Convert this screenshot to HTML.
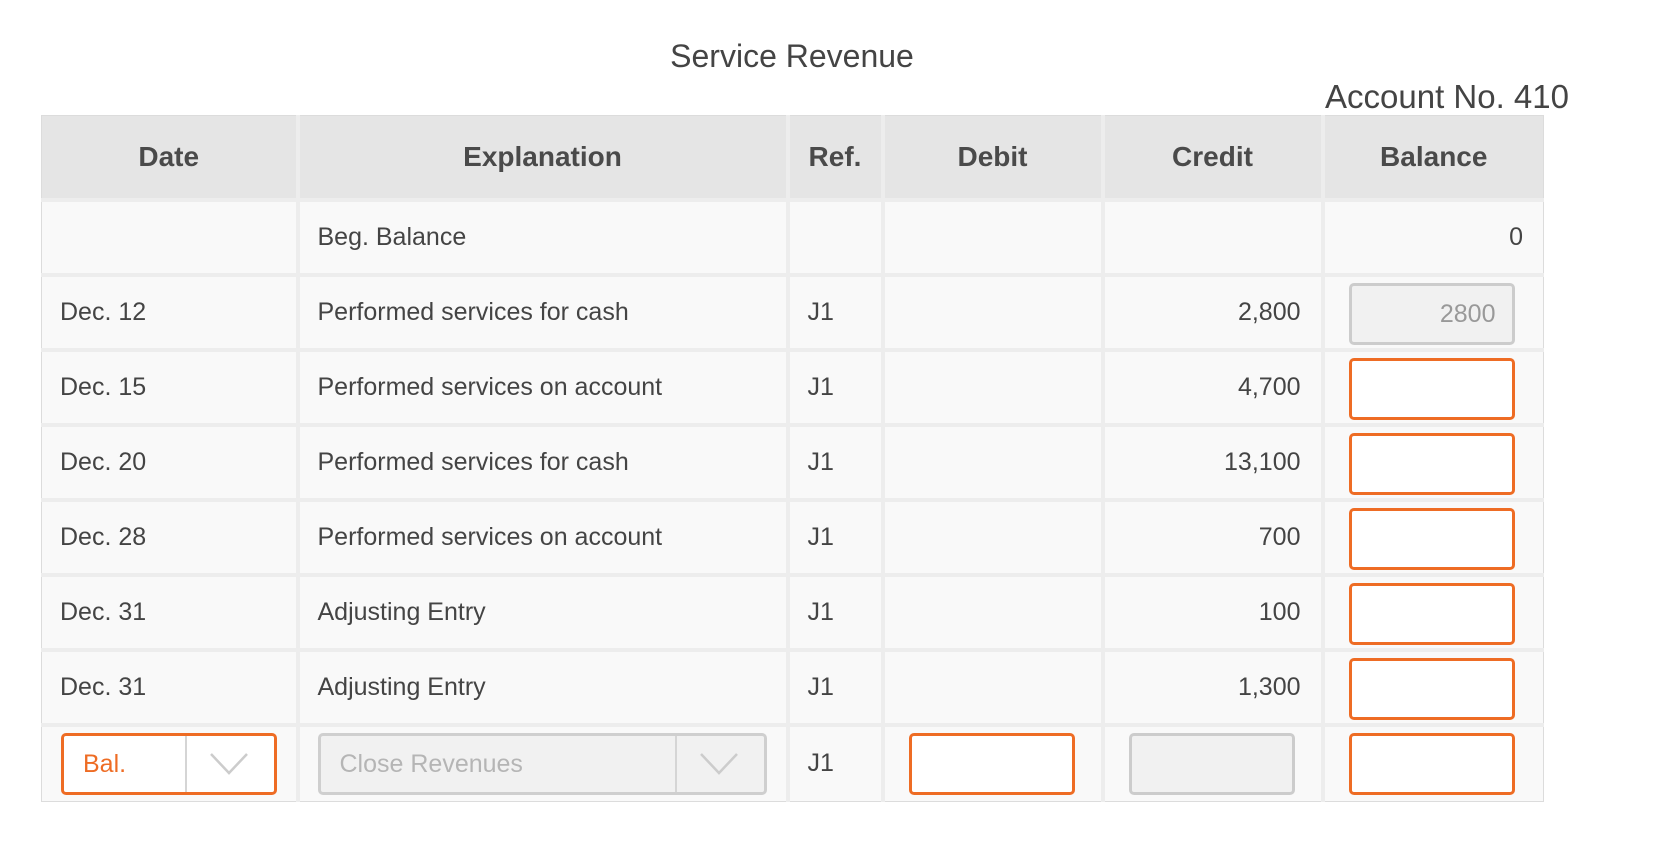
<!DOCTYPE html>
<html><head><meta charset="utf-8"><style>
*{box-sizing:border-box;margin:0;padding:0}
body{width:1656px;height:848px;background:#fff;font-family:"Liberation Sans",sans-serif;color:#444;position:relative;overflow:hidden}
.title{position:absolute;left:542px;width:500px;top:38px;text-align:center;font-size:32px;color:#444}
.acct{position:absolute;right:87px;top:78px;font-size:33px;color:#444}
table{position:absolute;left:41px;top:115px;width:1502px;border-collapse:collapse;table-layout:fixed;border:1px solid #dcdcdc;background:#f9f9f9}
td,th{border-right:4px solid #ededed;border-bottom:4px solid #ededed;position:relative;font-size:25px;font-weight:normal;color:#444}
td:last-child,th:last-child{border-right:none}
tr:last-child td{border-bottom:none;height:77px}
th{background:#e5e5e5;height:84px;font-size:28px;font-weight:bold;color:#4a4a4a;text-align:center}
td{height:75px;padding:0 18px}
td.r{text-align:right;padding-right:20px}
.inp{position:absolute;left:24px;top:6px;width:166px;height:62px;border:3px solid #ee6c24;border-radius:5px;background:#fff}
.dis{border-color:#cccccc;background:#f1f1f1;color:#999;text-align:right;padding-right:16px;line-height:56px;font-size:25px}
.dd{position:absolute;top:6px;height:62px;border-radius:5px;border:3px solid #ee6c24;background:#fff;font-size:25px;line-height:56px;padding-left:19px}
.dd .div{position:absolute;top:0;bottom:0;border-left:2px solid #d5d5d5}
.dd svg{position:absolute;top:16px}
</style></head><body>
<div class="title">Service Revenue</div>
<div class="acct">Account No. 410</div>
<table>
<colgroup><col style="width:256px"><col style="width:490px"><col style="width:95px"><col style="width:220px"><col style="width:220px"><col style="width:221px"></colgroup>
<tr><th>Date</th><th>Explanation</th><th>Ref.</th><th>Debit</th><th>Credit</th><th>Balance</th></tr>
<tr><td></td><td>Beg. Balance</td><td></td><td></td><td></td><td class="r">0</td></tr>
<tr><td>Dec. 12</td><td>Performed services for cash</td><td>J1</td><td></td><td class="r">2,800</td><td><div class="inp dis">2800</div></td></tr>
<tr><td>Dec. 15</td><td>Performed services on account</td><td>J1</td><td></td><td class="r">4,700</td><td><div class="inp"></div></td></tr>
<tr><td>Dec. 20</td><td>Performed services for cash</td><td>J1</td><td></td><td class="r">13,100</td><td><div class="inp"></div></td></tr>
<tr><td>Dec. 28</td><td>Performed services on account</td><td>J1</td><td></td><td class="r">700</td><td><div class="inp"></div></td></tr>
<tr><td>Dec. 31</td><td>Adjusting Entry</td><td>J1</td><td></td><td class="r">100</td><td><div class="inp"></div></td></tr>
<tr><td>Dec. 31</td><td>Adjusting Entry</td><td>J1</td><td></td><td class="r">1,300</td><td><div class="inp"></div></td></tr>
<tr>
<td><div class="dd" style="left:19px;width:216px;color:#ee6c24">Bal.<div class="div" style="left:121px"></div><svg style="left:145px" width="40" height="24" viewBox="0 0 40 24"><path d="M2 2 L20 21 L38 2" fill="none" stroke="#ccc" stroke-width="2.5"/></svg></div></td>
<td><div class="dd" style="left:18px;width:449px;border-color:#cfcfcf;background:#f1f1f1;color:#b5b5b5">Close Revenues<div class="div" style="left:354px"></div><svg style="left:378px" width="40" height="24" viewBox="0 0 40 24"><path d="M2 2 L20 21 L38 2" fill="none" stroke="#ccc" stroke-width="2.5"/></svg></div></td>
<td>J1</td>
<td><div class="inp"></div></td>
<td><div class="inp dis"></div></td>
<td><div class="inp"></div></td>
</tr>
</table>
</body></html>
